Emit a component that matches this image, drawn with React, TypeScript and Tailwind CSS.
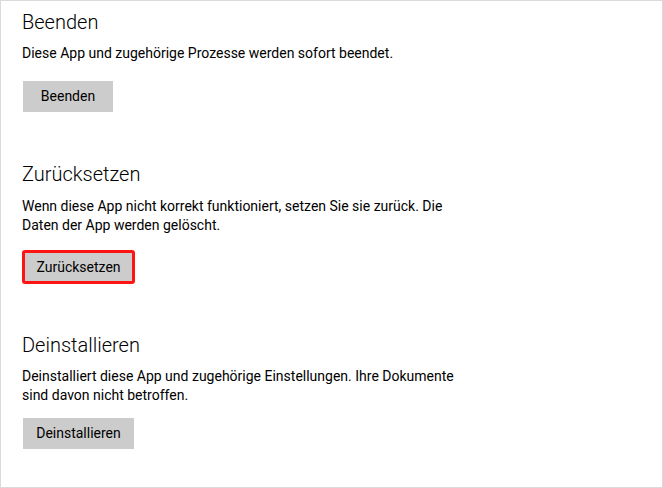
type Section = {
  title: string;
  text: string;
  button: string;
  headGap: string;
  textGap: string;
  btnGap: string;
  btnWidth: string;
  marked?: boolean;
};

const sections: Section[] = [
  {
    title: "Beenden",
    text: "Diese App und zugehörige Prozesse werden sofort beendet.",
    button: "Beenden",
    headGap: "mt-0",
    textGap: "mt-[8px]",
    btnGap: "mt-[18px]",
    btnWidth: "w-[90px]",
  },
  {
    title: "Zurücksetzen",
    text: "Wenn diese App nicht korrekt funktioniert, setzen Sie sie zurück. Die Daten der App werden gelöscht.",
    button: "Zurücksetzen",
    headGap: "mt-[48px]",
    textGap: "mt-[9px]",
    btnGap: "mt-[15px]",
    btnWidth: "w-[113px]",
    marked: true,
  },
  {
    title: "Deinstallieren",
    text: "Deinstalliert diese App und zugehörige Einstellungen. Ihre Dokumente sind davon nicht betroffen.",
    button: "Deinstallieren",
    headGap: "mt-[47px]",
    textGap: "mt-[8px]",
    btnGap: "mt-[13px]",
    btnWidth: "w-[111px]",
  },
];

export default function App() {
  return (
    <div
      className="h-[488px] w-[663px] overflow-hidden border border-[#dadada] bg-white pl-[21px] pt-[7px] text-black"
      style={{ fontFamily: "Roboto, 'Liberation Sans', sans-serif" }}
    >
      {sections.map((s) => (
        <section key={s.title} className={s.headGap}>
          <h2 className="text-[20px] font-light leading-[28px]">{s.title}</h2>
          <p className={`${s.textGap} w-[440px] text-[14px] leading-[19px]`}>{s.text}</p>
          {s.marked ? (
            <button
              className={`${s.btnGap} ${s.btnWidth} block h-[34px] rounded-[3px] border-[3px] border-[#ff1414] bg-[#cccccc] text-[14px] leading-[19px]`}
            >
              {s.button}
            </button>
          ) : (
            <button
              className={`${s.btnGap} ${s.btnWidth} ml-px block h-[31px] bg-[#cccccc] text-[14px] leading-[19px]`}
            >
              {s.button}
            </button>
          )}
        </section>
      ))}
    </div>
  );
}
